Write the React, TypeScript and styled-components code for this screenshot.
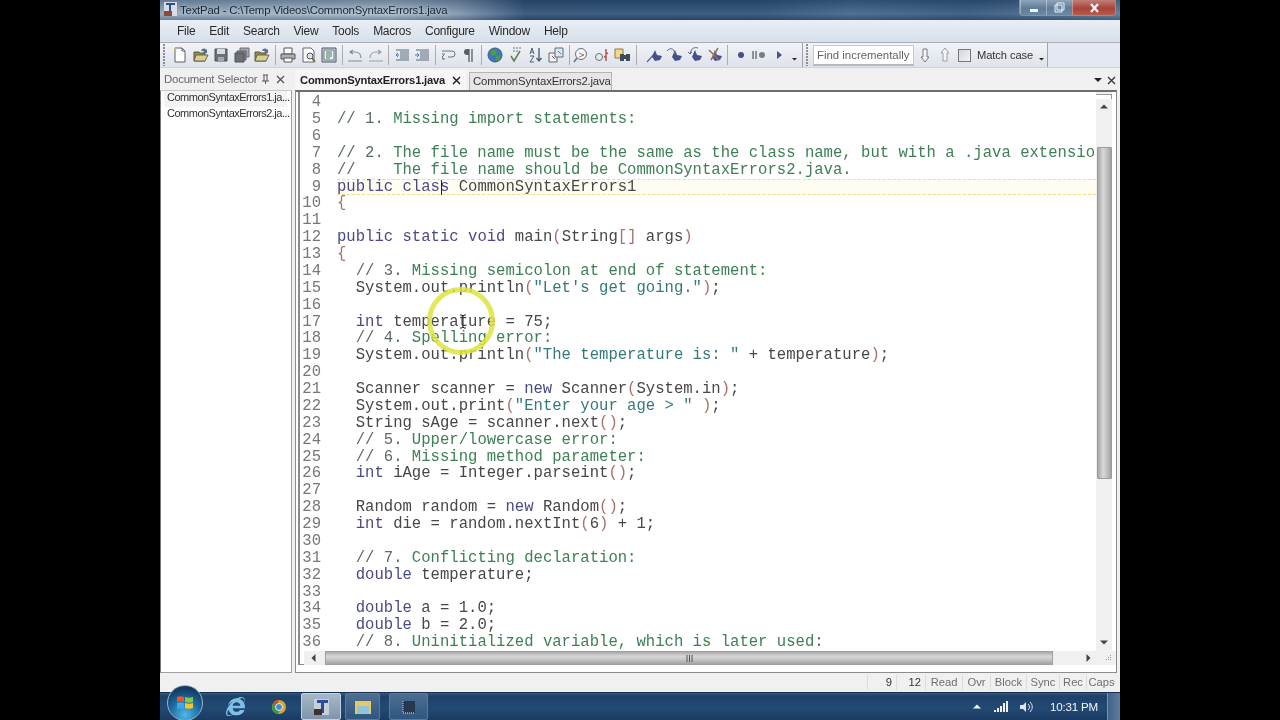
import React from "react";
import styled, { createGlobalStyle } from "styled-components";
import { FaInternetExplorer } from "react-icons/fa";

const GlobalStyle = createGlobalStyle`
  html, body { margin: 0; padding: 0; background: #000; }
  * { box-sizing: border-box; }
`;

const UI_FONT = `"Liberation Sans", Arial, sans-serif`;

const Screen = styled.div`
  position: relative;
  width: 960px;
  height: 720px;
  margin: 0 auto;
  display: flex;
  flex-direction: column;
  overflow: hidden;
  background: #f0f0f0;
  font-family: ${UI_FONT};
  filter: blur(0.3px);
`;

const TitleBar = styled.div`
  height: 20px;
  flex: none;
  display: flex;
  align-items: flex-start;
  padding-left: 3px;
  background:
    linear-gradient(180deg, rgba(15, 40, 70, 0.35), rgba(255, 255, 255, 0.08) 70%, rgba(20, 40, 60, 0.3)),
    linear-gradient(90deg, #8ea6bd 0, #a5b7c8 24%, #8298b0 31%, #2f5176 38%, #2c5179 62%, #41648c 72%, #33577e 84%, #5b7897 100%);
`;

const TitleText = styled.span`
  margin: 2px 0 0 1px;
  font-size: 11.4px;
  letter-spacing: -0.2px;
  line-height: 16px;
  color: #1c2733;
  text-shadow: 0 0 5px rgba(255, 255, 255, 0.6);
`;

const WindowButtons = styled.div`
  margin-left: auto;
  margin-right: 4px;
  height: 16px;
  display: flex;
  border: 1px solid #8094a8;
  border-top: none;
  border-radius: 0 0 4px 4px;
  overflow: hidden;
`;

const WindowButton = styled.div<{ $w: number; $close?: boolean }>`
  width: ${(p) => p.$w}px;
  display: flex;
  align-items: center;
  justify-content: center;
  border-left: 1px solid rgba(255, 255, 255, 0.35);
  background: ${(p) =>
    p.$close
      ? "linear-gradient(180deg, #c08078, #a8433a 55%, #b65a4e)"
      : "linear-gradient(180deg, #8fa5ba, #5f7c98 55%, #6d88a2)"};
`;

const MenuBar = styled.div`
  height: 23px;
  flex: none;
  display: flex;
  align-items: center;
  gap: 14px;
  padding-left: 17px;
  background: linear-gradient(180deg, #e9eef5, #d7e0eb);
  font-size: 12px;
  letter-spacing: -0.25px;
  color: #2a2a2a;
  border-bottom: 1px solid #a9aeb5;
`;

const ToolRow = styled.div`
  height: 25px;
  flex: none;
  display: flex;
  background: #e4e9f1;
  border-bottom: 1px solid #cfd3d8;
`;

const ToolGroup = styled.div<{ $w?: number }>`
  width: ${(p) => (p.$w ? `${p.$w}px` : "auto")};
  flex: none;
  display: flex;
  align-items: center;
  background: linear-gradient(180deg, #f1f3f7, #dee2ea);
  border-right: 1px solid #9fa4aa;
`;

const Grip = styled.div`
  width: 5px;
  height: 22px;
  margin: 0 2px 0 3px;
  flex: none;
  background: radial-gradient(circle at 1px 1px, #8a8f96 1px, transparent 1.2px) 0 0 / 3px 3px repeat-y;
`;

const Tool = styled.span<{ $w?: number }>`
  width: ${(p) => p.$w ?? 20.5}px;
  height: 22px;
  flex: none;
  display: flex;
  align-items: center;
  justify-content: center;
`;

const Sep = styled.span`
  width: 5.5px;
  height: 20px;
  flex: none;
  display: flex;
  justify-content: center;
  &::before {
    content: "";
    width: 1px;
    background: #a8adb4;
  }
`;

const FindInput = styled.div`
  width: 101px;
  height: 21px;
  flex: none;
  padding-left: 3px;
  background: #fff;
  border: 1px solid #c6cad0;
  border-bottom: 2px solid #b5b8bc;
  font-size: 11.4px;
  line-height: 19px;
  color: #5f6368;
  white-space: nowrap;
`;

const CheckBox = styled.span`
  width: 13px;
  height: 13px;
  flex: none;
  margin: 0 6px 0 4px;
  background: linear-gradient(135deg, #d4d6d9, #f2f3f4);
  border: 1px solid #777;
`;

const MatchCase = styled.span`
  font-size: 11.2px;
  letter-spacing: -0.1px;
  color: #333;
  white-space: nowrap;
`;

const Workspace = styled.div`
  height: 605px;
  flex: none;
  display: flex;
`;

const DocPanel = styled.div`
  width: 132px;
  flex: none;
  display: flex;
  flex-direction: column;
`;

const PanelHeader = styled.div`
  height: 22px;
  flex: none;
  display: flex;
  align-items: center;
  padding-left: 4px;
  font-size: 11.4px;
  letter-spacing: -0.2px;
  color: #666;
  white-space: nowrap;
`;

const PanelGlyph = styled.span<{ $left: number }>`
  margin-left: ${(p) => p.$left}px;
  display: flex;
  color: #555;
`;

const DocList = styled.div`
  flex: 1;
  padding: 0 4px 0 3px;
  background: #fff;
  border: 1px solid #a0a0a0;
  border-left-color: #777;
  border-top-color: #c8c8c8;
`;

const DocItem = styled.div<{ $selected?: boolean }>`
  height: 16px;
  padding-left: 3px;
  font-size: 11px;
  line-height: 13px;
  letter-spacing: -0.5px;
  color: #333;
  white-space: nowrap;
  background: ${(p) => (p.$selected ? "#f4f4f4" : "transparent")};
`;

const EditorPanel = styled.div`
  flex: 1;
  min-width: 0;
  display: flex;
  flex-direction: column;
  padding: 0 3px 0 3px;
`;

const TabBar = styled.div`
  height: 22px;
  flex: none;
  display: flex;
  align-items: flex-end;
`;

const TabActive = styled.div`
  width: 171px;
  height: 20px;
  flex: none;
  display: flex;
  align-items: center;
  padding-left: 5px;
  font-size: 11.2px;
  letter-spacing: -0.2px;
  font-weight: 700;
  color: #222;
  background: #f6f6f6;
`;

const TabClose = styled.span`
  margin-left: auto;
  margin-right: 5px;
  display: flex;
`;

const TabIdle = styled.div`
  width: 143px;
  height: 18px;
  flex: none;
  margin-left: 3px;
  padding-left: 3px;
  font-size: 11.4px;
  letter-spacing: -0.2px;
  line-height: 16px;
  color: #333;
  background: #e6e6e6;
  border: 1px solid #b4b4b4;
  border-bottom: none;
`;

const TabGlyphs = styled.div`
  margin-left: auto;
  height: 20px;
  display: flex;
  align-items: center;
  gap: 5px;
  padding-right: 1px;
`;

const EditorFrame = styled.div`
  flex: 1;
  min-height: 0;
  display: grid;
  grid-template-columns: 1fr 20px;
  grid-template-rows: 559px 1fr;
  background: #fff;
  border: 1px solid #8c8c8c;
  border-top: 2px solid #6e6e6e;
`;

const CodeArea = styled.div`
  min-width: 0;
  overflow: hidden;
  padding-top: 2.2px;
  border-left: 2px solid #8a8a8a;
  margin-left: 2px;
  font-family: "Liberation Mono", "Courier New", monospace;
  font-size: 15.6px;
  color: #474747;
`;

const Row = styled.div`
  height: 16.875px;
  line-height: 16.875px;
  display: flex;
  white-space: pre;
`;

const LineNo = styled.span`
  width: 21px;
  flex: none;
  text-align: right;
  color: #777;
  margin-right: 16px;
`;

const RowText = styled.span<{ $current?: boolean }>`
  position: relative;
  flex: 1;
  ${(p) =>
    p.$current &&
    `
    background: #fffdf2;
    border-top: 1px dashed #f0df85;
    border-bottom: 1px dashed #f0df85;
    line-height: 14.875px;
  `}
`;

const Keyword = styled.span`
  color: #4a4a86;
`;
const Str = styled.span`
  color: #33797a;
`;
const Bracket = styled.span`
  color: #a9716c;
`;
const Comment = styled.span`
  color: #3d8055;
`;
const CommentMark = styled.span`
  color: #5d6b62;
`;

const Caret = styled.span`
  position: absolute;
  left: 104px;
  top: 0;
  width: 1px;
  height: 15px;
  background: #222;
`;

const VScroll = styled.div`
  display: flex;
  flex-direction: column;
  align-items: center;
  background: #f0f0f0;
  margin-right: 4px;
`;

const SplitBox = styled.div`
  width: 100%;
  height: 5px;
  flex: none;
  margin-top: 2px;
  background: #fff;
  border: 1px solid #999;
  border-width: 1px 1px 0 0;
`;

const ArrowBox = styled.div<{ $h: number; $end?: boolean }>`
  height: ${(p) => p.$h}px;
  flex: none;
  display: flex;
  align-items: ${(p) => (p.$end ? "flex-end" : "flex-start")};
  padding: ${(p) => (p.$end ? "0 0 6px" : "5px 0 0")};
  justify-content: center;
`;

const VThumb = styled.div`
  width: 15px;
  height: 332px;
  flex: none;
  display: flex;
  align-items: center;
  justify-content: center;
  background: linear-gradient(90deg, #a8a8a8, #d8d8d8 40%, #c4c4c4 65%, #a2a2a2);
  border: 1px solid #9a9a9a;
  border-radius: 1px;
`;

const HScrollRow = styled.div`
  grid-column: 1 / span 2;
  display: flex;
  align-items: flex-start;
  padding-left: 2px;
  background: #fff;
`;

const HSplit = styled.div`
  width: 6px;
  height: 14px;
  flex: none;
  border-left: 2px solid #8a8a8a;
  border-bottom: 1px solid #8a8a8a;
`;

const HTrack = styled.div`
  flex: 1;
  height: 14px;
  display: flex;
  align-items: center;
  background: #f0f0f0;
`;

const HThumb = styled.div`
  width: 728px;
  height: 14px;
  flex: none;
  margin-left: 9px;
  display: flex;
  align-items: center;
  justify-content: center;
  background: linear-gradient(180deg, #a8a8a8, #d8d8d8 35%, #c4c4c4 65%, #a2a2a2);
  border: 1px solid #a0a0a0;
`;

const HArrow = styled.span<{ $left: number }>`
  display: flex;
  margin-left: ${(p) => p.$left}px;
`;

const StatusBar = styled.div`
  height: 19px;
  flex: none;
  display: flex;
  align-items: center;
  justify-content: flex-end;
  padding-right: 4px;
  font-size: 11.2px;
  background: #f0f0f0;
`;

const StatusCell = styled.span<{ $w: number; $dark?: boolean; $right?: boolean }>`
  width: ${(p) => p.$w}px;
  height: 15px;
  line-height: 15px;
  flex: none;
  padding-right: ${(p) => (p.$right ? 4 : 0)}px;
  text-align: ${(p) => (p.$right ? "right" : "center")};
  color: ${(p) => (p.$dark ? "#333" : "#6f6f6f")};
  border-left: 1px solid #dcdcdc;
`;

const Taskbar = styled.div`
  height: 28px;
  flex: none;
  display: flex;
  align-items: center;
  background: linear-gradient(180deg, #35587e, #1d4168 12%, #234a74 55%, #1b3b62);
  border-top: 1px solid #16304f;
`;

const StartOrb = styled.div`
  position: relative;
  width: 36px;
  height: 36px;
  flex: none;
  margin: -8px 0 0 7px;
  display: flex;
  align-items: center;
  justify-content: center;
  border-radius: 50%;
  border: 1px solid #9db3c8;
  background: radial-gradient(circle at 50% 85%, #54b8e8, #1d6aa0 45%, #123a60 80%);
`;

const PinIcon = styled.span<{ $w: number; $left?: number }>`
  width: ${(p) => p.$w}px;
  margin-left: ${(p) => p.$left ?? 0}px;
  height: 28px;
  flex: none;
  display: flex;
  align-items: center;
  justify-content: center;
`;

const TaskButton = styled.div<{ $w: number; $left: number; $active?: boolean }>`
  width: ${(p) => p.$w}px;
  height: 27px;
  margin-left: ${(p) => p.$left}px;
  flex: none;
  display: flex;
  align-items: center;
  justify-content: center;
  border: 1px solid ${(p) => (p.$active ? "#c3d0dc" : "#5e7a96")};
  border-radius: 2px;
  background: ${(p) =>
    p.$active
      ? "linear-gradient(180deg, #a8b8c8, #7f94aa)"
      : "linear-gradient(180deg, #4e6e90, #30567e)"};
`;

const Tray = styled.div`
  margin-left: auto;
  display: flex;
  align-items: center;
  height: 28px;
`;

const Clock = styled.span`
  margin-left: 17px;
  width: 57px;
  font-size: 11.6px;
  letter-spacing: -0.2px;
  color: #f2f5f8;
  white-space: nowrap;
`;

const ShowDesktop = styled.div`
  width: 13px;
  height: 28px;
  background: linear-gradient(90deg, #41638a, #5f7d9c);
  border-left: 1px solid #7d93a9;
`;

const Ring = styled.div`
  position: absolute;
  left: 267px;
  top: 287px;
  width: 68px;
  height: 68px;
  border-radius: 50%;
  border: 5px solid rgba(222, 228, 62, 0.85);
  pointer-events: none;
`;

const IBeam = styled.svg`
  position: absolute;
  left: 299px;
  top: 314px;
  pointer-events: none;
`;

const Glyph = ({ children, w = 16, h = 16 }: { children: React.ReactNode; w?: number; h?: number }) => (
  <svg width={w} height={h} viewBox={`0 0 ${w} ${h}`} fill="none">
    {children}
  </svg>
);

const CloseX = ({ color = "#333" }: { color?: string }) => (
  <Glyph w={9} h={9}>
    <path d="M1 1l7 7M8 1L1 8" stroke={color} strokeWidth="1.3" />
  </Glyph>
);

const Folder = ({ arrow }: { arrow?: boolean }) => (
  <Glyph>
    <path d="M1 5h5l1 1h5v8H1z" fill="#8f8a55" stroke="#5e5a34" />
    <path d="M3 8h12l-3 6H1z" fill="#d7cf95" stroke="#6d6940" />
    {arrow && <path d="M8 4c1-3 4-3 5-1l1-1v4h-4l1-1c-1-2-2-1-3-1z" fill="#5b6f86" />}
  </Glyph>
);

const Lines = ({ flip }: { flip?: boolean }) => (
  <Glyph>
    {[3, 5, 7, 9, 11, 13].map((y) => (
      <path key={y} d={`M${y > 4 && y < 12 ? 6 : 2} ${y}h${y > 4 && y < 12 ? 9 : 13}`} stroke="#5b6878" />
    ))}
    <path d={flip ? "M1 8h3M3 6l2 2-2 2" : "M5 8H2M4 6L2 8l2 2"} stroke="#3f79b5" />
  </Glyph>
);

const Flag = ({ mod }: { mod?: "next" | "prev" | "clear" }) => (
  <Glyph w={18} h={16}>
    {!mod && <path d="M1 15L9 6" stroke="#5a6a90" strokeWidth="1.2" />}
    <path d="M9 3l2 5 5 1-2 4-5 1-3-4z" fill="#45508c" />
    {mod === "next" && <path d="M1 4c2-3 6-3 7 0l1 3" stroke="#5a6a90" />}
    {mod === "prev" && <path d="M12 1C9 0 6 1 5 4l-1 3M2 5l2 2 2-2" stroke="#5a6a90" />}
    {mod === "clear" && <path d="M3 3l10 10M12 1L5 13" stroke="#93705f" strokeWidth="1.5" />}
  </Glyph>
);

const FILE_TOOLS = [
  <Glyph key="new">
    <path d="M3 1h7l3 3v11H3z" fill="#fff" stroke="#55626f" />
    <path d="M10 1v3h3" stroke="#55626f" />
    <path d="M2 1l2 2" stroke="#e7c94d" strokeWidth="1.4" />
  </Glyph>,
  <Folder key="open" arrow />,
  <Glyph key="save">
    <path d="M2 2h12v12H2z" fill="#6b7078" stroke="#4d5157" />
    <path d="M4 2h8v5H4z" fill="#d9dbdf" />
    <path d="M5 10h6v4H5z" fill="#a5a8ad" />
  </Glyph>,
  <Glyph key="saveall">
    <path d="M6 1h9v9H6z" fill="#a2a5aa" stroke="#6d7076" />
    <path d="M3 4h9v9H3z" fill="#85888e" stroke="#5c5f64" />
    <path d="M1 6h9v9H1z" fill="#6b7078" stroke="#4d5157" />
  </Glyph>,
  <Folder key="reopen" arrow />,
];

const PRINT_TOOLS = [
  <Glyph key="print">
    <path d="M4 1h8v6H4z" fill="#fff" stroke="#555" />
    <path d="M1 7h14v5H1z" fill="#aab0b8" stroke="#50555c" />
    <path d="M4 11h8v4H4z" fill="#fff" stroke="#555" />
  </Glyph>,
  <Glyph key="preview">
    <path d="M2 1h8l3 3v11H2z" fill="#fff" stroke="#5f6871" />
    <circle cx="9" cy="9" r="3" fill="#d8e4ee" stroke="#4c5560" />
    <path d="M11 11l3 4" stroke="#8a6b3a" strokeWidth="2" />
  </Glyph>,
  <Glyph key="sheet">
    <path d="M1 1h14v14H1z" fill="#c8d3df" stroke="#4f5963" />
    <path d="M3 3h10v10H3z" fill="#edf3ee" stroke="#6b7883" />
    <path d="M5 5h6M5 7h6M5 9h6M5 11h4" stroke="#3f7a60" />
  </Glyph>,
];

const UNDO_TOOLS = [
  <Glyph key="undo">
    <path d="M1 14h14" stroke="#7f8c9b" />
    <path d="M14 11c0-4-3-6-6-6H4M6 3L3 5l3 2" stroke="#7f8c9b" strokeWidth="1.2" />
  </Glyph>,
  <Glyph key="redo">
    <path d="M1 14h14" stroke="#95a0ac" />
    <path d="M2 11c0-4 3-6 6-6h4M10 3l3 2-3 2" stroke="#95a0ac" strokeWidth="1.2" />
  </Glyph>,
];

const WORLD_TOOLS = [
  <Glyph key="globe">
    <circle cx="8" cy="8" r="7" fill="#3d79b8" stroke="#3b5f86" />
    <path d="M3 4l5-2 2 3-2 3-3 1zM9 9l5-1-2 5-3 1z" fill="#4f9b4a" />
  </Glyph>,
  <Glyph key="spell">
    <path d="M4 9l3 5 6-10" stroke="#5e7f55" strokeWidth="1.5" />
    <path d="M6 1h2M9 1h2M12 1h2M6 4h2M9 4h2" stroke="#67707a" />
  </Glyph>,
  <Glyph key="sort">
    <path d="M2 7l2-6 2 6M3 5h2M2 9h4l-4 6h4" stroke="#4d5f73" />
    <path d="M11 1v13M8.500 11l2.500 3 2.500-3" stroke="#4d5f73" strokeWidth="1.4" />
  </Glyph>,
  <Glyph key="compare">
    <path d="M1 6h8v9H1z" fill="#eef2f6" stroke="#5a6d80" />
    <path d="M7 1h8v9H7z" fill="#dbe5ee" stroke="#5a6d80" />
    <path d="M4 9l3 3M10 4l3 3" stroke="#a85d4f" />
  </Glyph>,
];

const FIND_TOOLS = [
  <Glyph key="find" w={18}>
    <circle cx="8" cy="7" r="5.500" fill="#f4f6f8" stroke="#68727c" />
    <path d="M4 11l-3 4" stroke="#68727c" strokeWidth="1.6" />
    <path d="M6 6l5 2-5 2" stroke="#b76f5f" />
  </Glyph>,
  <Glyph key="replace" w={18}>
    <circle cx="5" cy="10" r="3.500" stroke="#68727c" />
    <path d="M12 2v5l2-1M12 14v-5l-2 1" stroke="#b2564b" strokeWidth="1.5" />
  </Glyph>,
  <Glyph key="findfiles" w={18}>
    <path d="M1 2h8v9H1z" fill="#f1d98b" stroke="#8f7a3e" />
    <path d="M6 7h4v7H6zM12 7h4v7h-4zM9 8h4v4H9z" fill="#3f4b58" />
  </Glyph>,
];

const BOOKMARK_TOOLS = [
  <Flag key="b1" />,
  <Flag key="b2" mod="next" />,
  <Flag key="b3" mod="prev" />,
  <Flag key="b4" mod="clear" />,
];

const Dropdown = () => (
  <Glyph w={7} h={16}>
    <path d="M1 11h5l-2.500 2.500z" fill="#222" />
  </Glyph>
);

const SOURCE = [
  "",
  "// 1. Missing import statements:",
  "",
  "// 2. The file name must be the same as the class name, but with a .java extension:",
  "//    The file name should be CommonSyntaxErrors2.java.",
  "public class CommonSyntaxErrors1",
  "{",
  "",
  "public static void main(String[] args)",
  "{",
  "  // 3. Missing semicolon at end of statement:",
  '  System.out.println("Let\'s get going.");',
  "",
  "  int temperature = 75;",
  "  // 4. Spelling error:",
  '  System.out.println("The temperature is: " + temperature);',
  "",
  "  Scanner scanner = new Scanner(System.in);",
  '  System.out.print("Enter your age > " );',
  "  String sAge = scanner.next();",
  "  // 5. Upper/lowercase error:",
  "  // 6. Missing method parameter:",
  "  int iAge = Integer.parseint();",
  "",
  "  Random random = new Random();",
  "  int die = random.nextInt(6) + 1;",
  "",
  "  // 7. Conflicting declaration:",
  "  double temperature;",
  "",
  "  double a = 1.0;",
  "  double b = 2.0;",
  "  // 8. Uninitialized variable, which is later used:",
];

// rough java colouring, good enough for these lines
const colourCode = (text: string) => {
  const trimmed = text.trimStart();
  if (trimmed.startsWith("//")) {
    const m = text.match(/^(\s*\/\/\s*(?:\d\.)?)(.*)$/);
    return (
      <>
        <CommentMark>{m ? m[1] : ""}</CommentMark>
        <Comment>{m ? m[2] : text}</Comment>
      </>
    );
  }
  const parts = text.split(/("[^"]*"|\b(?:public|class|static|void|int|double|new)\b|[(){}[\]])/);
  return parts.map((part, i) => {
    if (part.startsWith('"')) return <Str key={i}>{part}</Str>;
    if (/^(public|class|static|void|int|double|new)$/.test(part)) return <Keyword key={i}>{part}</Keyword>;
    if (/^[(){}[\]]$/.test(part)) return <Bracket key={i}>{part}</Bracket>;
    return part;
  });
};

export default function App() {
  return (
    <Screen>
      <GlobalStyle />
      <TitleBar>
        <Glyph w={16} h={18}>
          <path d="M1 2h13v14H1z" fill="#d8dde2" />
          <path d="M3 3h9v2H8v8H6V5H3z" fill="#2c4f9a" />
          <path d="M1 11h8v5H1z" fill="#8a4a3a" />
        </Glyph>
        <TitleText>TextPad - C:\Temp Videos\CommonSyntaxErrors1.java</TitleText>
        <WindowButtons>
          <WindowButton $w={26}>
            <Glyph w={10} h={10}>
              <path d="M1 6h8v3H1z" fill="#f2f4f6" />
            </Glyph>
          </WindowButton>
          <WindowButton $w={26}>
            <Glyph w={11} h={11}>
              <path d="M3 1h7v7H3zM1 3h7v7H1z" fill="#6d88a2" stroke="#eef2f5" />
            </Glyph>
          </WindowButton>
          <WindowButton $close $w={43}>
            <Glyph w={11} h={10}>
              <path d="M2 1l7 8M9 1L2 9" stroke="#f5eeee" strokeWidth="2.4" />
            </Glyph>
          </WindowButton>
        </WindowButtons>
      </TitleBar>

      <MenuBar>
        {["File", "Edit", "Search", "View", "Tools", "Macros", "Configure", "Window", "Help"].map((m) => (
          <span key={m}>{m}</span>
        ))}
      </MenuBar>

      <ToolRow>
        <ToolGroup $w={643}>
          <Grip />
          {FILE_TOOLS.map((t, i) => (
            <Tool key={i}>{t}</Tool>
          ))}
          <Sep />
          {PRINT_TOOLS.map((t, i) => (
            <Tool key={i}>{t}</Tool>
          ))}
          <Sep />
          {UNDO_TOOLS.map((t, i) => (
            <Tool key={i}>{t}</Tool>
          ))}
          <Sep />
          <Tool>
            <Lines />
          </Tool>
          <Tool>
            <Lines flip />
          </Tool>
          <Sep />
          <Tool>
            <Glyph>
              <path d="M2 4h10a3 3 0 010 6H8M2 12h3M4 8l-2 2 2 2M2 7h3" stroke="#66727f" />
            </Glyph>
          </Tool>
          <Tool>
            <Glyph>
              <path d="M11 2v13M8 2v13" stroke="#55606b" strokeWidth="1.3" />
              <path d="M8 2H6a3 3 0 000 6h2z" fill="#55606b" />
            </Glyph>
          </Tool>
          <Sep />
          {WORLD_TOOLS.map((t, i) => (
            <Tool key={i}>{t}</Tool>
          ))}
          <Sep />
          {FIND_TOOLS.map((t, i) => (
            <Tool key={i}>{t}</Tool>
          ))}
          <Sep />
          <Tool $w={6} />
          {BOOKMARK_TOOLS.map((t, i) => (
            <Tool key={i} $w={20}>
              {t}
            </Tool>
          ))}
          <Sep />
          <Tool $w={20}>
            <Glyph w={8} h={8}>
              <circle cx="4" cy="4" r="3" fill="#45508c" />
            </Glyph>
          </Tool>
          <Tool $w={18}>
            <Glyph w={16} h={10}>
              <path d="M1 1v8M4 1v8" stroke="#666d75" strokeWidth="1.4" />
              <circle cx="10" cy="5" r="3" fill="#777e86" />
            </Glyph>
          </Tool>
          <Tool $w={22}>
            <Glyph w={7} h={10}>
              <path d="M1 1l5 4-5 4z" fill="#45508c" />
            </Glyph>
          </Tool>
          <Tool $w={8}>
            <Dropdown />
          </Tool>
        </ToolGroup>
        <ToolGroup $w={245}>
          <Grip />
          <FindInput>Find incrementally</FindInput>
          <Tool $w={21}>
            <Glyph>
              <path d="M6 2h4v8h2l-4 5-4-5h2z" fill="#f4f5f6" stroke="#737a82" />
            </Glyph>
          </Tool>
          <Tool $w={19}>
            <Glyph>
              <path d="M6 14h4V6h2L8 1 4 6h2z" fill="#f4f5f6" stroke="#9a9fa5" />
            </Glyph>
          </Tool>
          <CheckBox />
          <MatchCase>Match case</MatchCase>
          <Tool $w={16}>
            <Dropdown />
          </Tool>
        </ToolGroup>
      </ToolRow>

      <Workspace>
        <DocPanel>
          <PanelHeader>
            Document Selector
            <PanelGlyph $left={4}>
              <Glyph w={9} h={10}>
                <path d="M3 1v6M6 1v6M1 7h7M2 1h5M4.500 7v3" stroke="#555" />
              </Glyph>
            </PanelGlyph>
            <PanelGlyph $left={6}>
              <CloseX color="#555" />
            </PanelGlyph>
          </PanelHeader>
          <DocList>
            <DocItem $selected>CommonSyntaxErrors1.ja...</DocItem>
            <DocItem>CommonSyntaxErrors2.ja...</DocItem>
          </DocList>
        </DocPanel>

        <EditorPanel>
          <TabBar>
            <TabActive>
              CommonSyntaxErrors1.java
              <TabClose>
                <CloseX color="#111" />
              </TabClose>
            </TabActive>
            <TabIdle>CommonSyntaxErrors2.java</TabIdle>
            <TabGlyphs>
              <Glyph w={8} h={6}>
                <path d="M0 1h8L4 5z" fill="#222" />
              </Glyph>
              <CloseX />
            </TabGlyphs>
          </TabBar>
          <EditorFrame>
            <CodeArea>
              {SOURCE.map((line, i) => {
                const no = i + 4;
                return (
                  <Row key={no}>
                    <LineNo>{no}</LineNo>
                    <RowText $current={no === 9}>
                      {colourCode(line)}
                      {no === 9 && <Caret />}
                    </RowText>
                  </Row>
                );
              })}
            </CodeArea>
            <VScroll>
              <SplitBox />
              <ArrowBox $h={48}>
                <Glyph w={8} h={5}>
                  <path d="M0 4.500h8L4 .5z" fill="#444" />
                </Glyph>
              </ArrowBox>
              <VThumb />
              <ArrowBox $h={172} $end>
                <Glyph w={8} h={5}>
                  <path d="M0 .5h8L4 4.500z" fill="#444" />
                </Glyph>
              </ArrowBox>
            </VScroll>
            <HScrollRow>
              <HSplit />
              <HTrack>
                <HArrow $left={7}>
                  <Glyph w={5} h={8}>
                    <path d="M4.500 0v8l-4-4z" fill="#444" />
                  </Glyph>
                </HArrow>
                <HThumb>
                  <Glyph w={7} h={7}>
                    <path d="M1 0v7M3.500 0v7M6 0v7" stroke="#555" />
                  </Glyph>
                </HThumb>
                <HArrow $left={33}>
                  <Glyph w={5} h={8}>
                    <path d="M.5 0v8l4-4z" fill="#444" />
                  </Glyph>
                </HArrow>
                <HArrow $left={12}>
                  <Glyph w={9} h={9}>
                    <path d="M7 1h1v1H7zM5 3h1v1H5zM7 3h1v1H7zM3 5h1v1H3zM5 5h1v1H5zM7 5h1v1H7z" fill="#9a9a9a" />
                  </Glyph>
                </HArrow>
              </HTrack>
            </HScrollRow>
          </EditorFrame>
        </EditorPanel>
      </Workspace>

      <StatusBar>
        <StatusCell $w={29} $dark $right>
          9
        </StatusCell>
        <StatusCell $w={29} $dark $right>
          12
        </StatusCell>
        <StatusCell $w={37}>Read</StatusCell>
        <StatusCell $w={28}>Ovr</StatusCell>
        <StatusCell $w={36}>Block</StatusCell>
        <StatusCell $w={33}>Sync</StatusCell>
        <StatusCell $w={27}>Rec</StatusCell>
        <StatusCell $w={30}>Caps</StatusCell>
      </StatusBar>

      <Taskbar>
        <StartOrb>
          <Glyph w={20} h={18}>
            <path d="M2 3c2-1 4-1 7 0v5C6 7 4 7 2 8z" fill="#e8562e" />
            <path d="M10 3c3 1 5 1 8 0v5c-3 1-5 1-8 0z" fill="#8cc63f" />
            <path d="M2 9c2-1 4-1 7 0v6c-3-1-5-1-7 0z" fill="#3fa9e5" />
            <path d="M10 9c3 1 5 1 8 0v5c-3 1-5 1-8 0z" fill="#f7c62d" />
          </Glyph>
        </StartOrb>
        <PinIcon $w={43} $left={11}>
          <FaInternetExplorer size={19} color="#7cc0e8" />
        </PinIcon>
        <PinIcon $w={43}>
          <Glyph w={16} h={16}>
            <circle cx="8" cy="8" r="7" fill="#d9a62e" />
            <path d="M8 1a7 7 0 00-6 3.500L5 9z" fill="#d2452f" />
            <path d="M2 4.500A7 7 0 007 15l3-5z" fill="#3c9a4b" />
            <circle cx="8" cy="8" r="3.500" fill="#4a86c8" stroke="#e8eef2" />
          </Glyph>
        </PinIcon>
        <TaskButton $w={40} $left={1} $active>
          <Glyph w={20} h={20}>
            <path d="M3 2h15v16H3z" fill="#c7d0d9" />
            <path d="M6 3h11v3h-4v10h-3V6H6z" fill="#2b4c96" />
            <path d="M3 12h8v6H3z" fill="#40302c" />
          </Glyph>
        </TaskButton>
        <TaskButton $w={35} $left={4}>
          <Glyph w={20} h={20}>
            <path d="M2 4h16v13H2z" fill="#e8c766" />
            <path d="M4 9h12v8H4z" fill="#8fc4da" />
          </Glyph>
        </TaskButton>
        <TaskButton $w={39} $left={9}>
          <Glyph w={16} h={16}>
            <path d="M2 2h12v12H2z" fill="#26384e" />
            <path d="M2 14h12" stroke="#f0f0f0" strokeDasharray="1 1" />
            <path d="M2 2v12" stroke="#c8d0d8" strokeDasharray="1 1" />
          </Glyph>
        </TaskButton>
        <Tray>
          <Glyph w={8} h={5}>
            <path d="M0 4.500h8L4 .5z" fill="#f2f5f8" />
          </Glyph>
          <PinIcon $w={38}>
            <Glyph w={15} h={11}>
              <path d="M1 9h2v2H1zM4 7h2v4H4zM7 5h2v6H7zM10 2h2v9h-2zM13 0h2v11h-2z" fill="#eef2f6" />
            </Glyph>
          </PinIcon>
          <Glyph w={14} h={12}>
            <path d="M1 4h3l3-3v10L4 8H1z" fill="#dfe5ec" />
            <path d="M9 3c2 2 2 4 0 6M11 1c3 3 3 7 0 10" stroke="#dfe5ec" />
          </Glyph>
          <Clock>10:31 PM</Clock>
          <ShowDesktop />
        </Tray>
      </Taskbar>

      <Ring />
      <IBeam width="8" height="15" viewBox="0 0 8 15" fill="none">
        <path d="M1 1h2l1 1 1-1h2M4 2v11M1 14h2l1-1 1 1h2" stroke="#222" />
      </IBeam>
    </Screen>
  );
}
